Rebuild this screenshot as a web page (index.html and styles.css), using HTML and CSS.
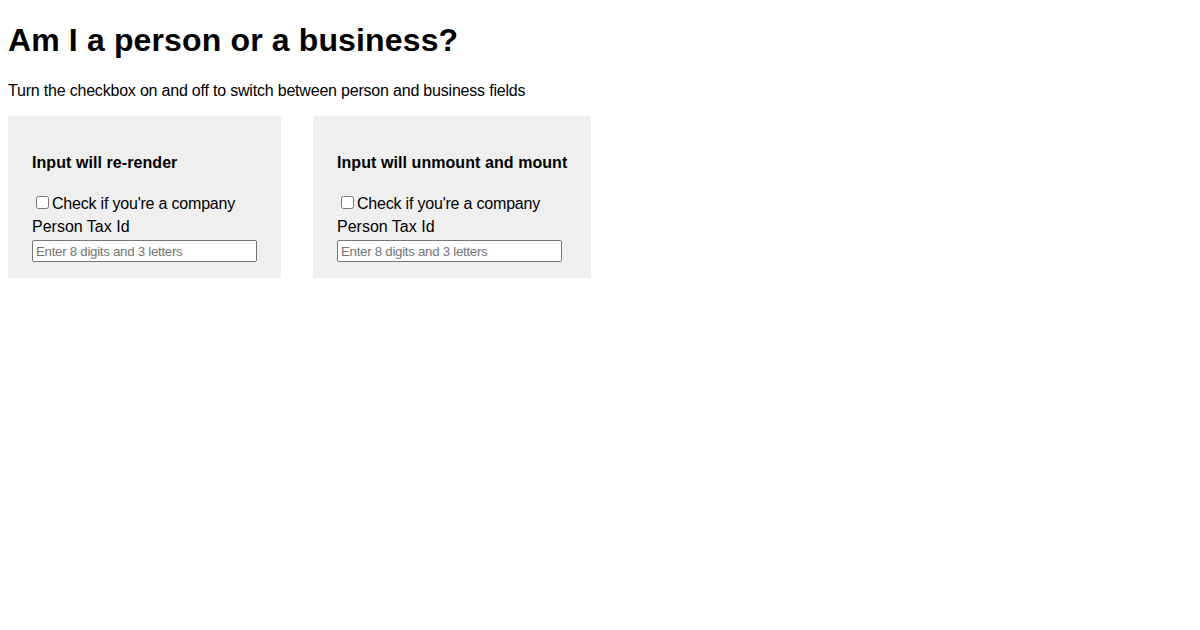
FILE: index.html
```html
<!DOCTYPE html>
<html>
<head>
<meta charset="utf-8">
<link rel="stylesheet" href="styles.css">
</head>
<body>
<h1>Am I a person or a business?</h1>
<p>Turn the checkbox on and off to switch between person and business fields</p>
<div class="examples">
  <div class="card">
    <h4>Input will re-render</h4>
    <label class="check"><input type="checkbox">Check if you're a company</label>
    <label class="field-label">Person Tax Id</label>
    <input class="tax" type="text" placeholder="Enter 8 digits and 3 letters">
  </div>
  <div class="card">
    <h4>Input will unmount and mount</h4>
    <label class="check"><input type="checkbox">Check if you're a company</label>
    <label class="field-label">Person Tax Id</label>
    <input class="tax" type="text" placeholder="Enter 8 digits and 3 letters">
  </div>
</div>
</body>
</html>
```
FILE: styles.css
```css
body {
  font-family: "Liberation Sans", Arial, sans-serif;
  color: #000;
  background: #fff;
}
h1 {
  margin: 14px 0 23px;
  letter-spacing: 0.14px;
}
p {
  margin: 0 0 16px;
  letter-spacing: -0.2px;
}
.examples {
  display: flex;
  gap: 32px;
  align-items: flex-start;
}
.card {
  background: #efefef;
  padding: 17px 24px 16px;
}
.card h4 {
  margin: 21px 0 21px;
  letter-spacing: 0.07px;
}
.check {
  display: block;
  letter-spacing: -0.2px;
  padding-bottom: 5px;
}
.field-label {
  display: block;
}
.tax {
  display: block;
  width: 225px;
  height: 22px;
  box-sizing: border-box;
  font-family: "Liberation Sans", Arial, sans-serif;
  letter-spacing: -0.3px;
  margin-top: 4px;
}
```
